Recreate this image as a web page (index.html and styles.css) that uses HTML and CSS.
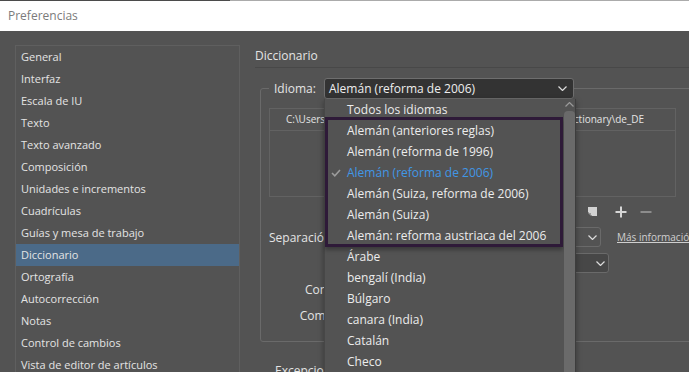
FILE: index.html
```html
<!DOCTYPE html>
<html>

<head>
    <title>Preferencias</title>
    <link rel="stylesheet" href="styles.css">
</head>

<body>
    <div class="edge"></div>
    <div class="titlebar">Preferencias</div>
    <div class="main">
        <ul class="sections">
            <li>General</li>
            <li>Interfaz</li>
            <li>Escala de IU</li>
            <li>Texto</li>
            <li>Texto avanzado</li>
            <li>Composición</li>
            <li>Unidades e incrementos</li>
            <li>Cuadrículas</li>
            <li>Guías y mesa de trabajo</li>
            <li class="current">Diccionario</li>
            <li>Ortografía</li>
            <li>Autocorrección</li>
            <li>Notas</li>
            <li>Control de cambios</li>
            <li>Vista de editor de artículos</li>
        </ul>
        <div class="pane">
            <h2>Diccionario</h2>
            <fieldset class="lang">
                <legend>
                    <span class="lang-label">Idioma:</span>
                    <span class="combo">
                        <span class="combo-value">Alemán (reforma de 2006)</span>
                        <svg class="chevron" width="9" height="5" viewBox="0 0 9 5">
                            <polyline points="0.5,0.5 4.5,4.5 8.5,0.5" />
                        </svg>
                        <div class="popup">
                            <ul class="options">
                                <li>Todos los idiomas</li>
                                <li>Alemán (anteriores reglas)</li>
                                <li>Alemán (reforma de 1996)</li>
                                <li class="selected">
                                    <svg class="check" width="10" height="8" viewBox="0 0 10 8">
                                        <polyline points="1,4 3.8,6.8 9,1" />
                                    </svg>Alemán (reforma de 2006)
                                </li>
                                <li>Alemán (Suiza, reforma de 2006)</li>
                                <li>Alemán (Suiza)</li>
                                <li>Alemán: reforma austriaca del 2006</li>
                                <li>Árabe</li>
                                <li>bengalí (India)</li>
                                <li>Búlgaro</li>
                                <li>canara (India)</li>
                                <li>Catalán</li>
                                <li>Checo</li>
                            </ul>
                            <div class="group-mark"></div>
                            <div class="scrollbar">
                                <svg class="scroll-up" width="9" height="5" viewBox="0 0 9 5">
                                    <polyline points="0.5,4.5 4.5,0.5 8.5,4.5" />
                                </svg>
                                <div class="thumb"></div>
                            </div>
                        </div>
                    </span>
                </legend>

                <div class="dicts">
                    <div class="dicts-head">C:\Users\ab\AppData\Roaming\Adobe\InDesign\Version 16\Dictionary\de_DE</div>
                </div>
                <div class="tools">
                    <svg class="tool" width="12" height="12" viewBox="0 0 12 12">
                        <circle cx="6" cy="6" r="4" fill="none" stroke="#bdbdbd" stroke-width="2" />
                    </svg>
                    <svg class="tool new" width="12" height="12" viewBox="0 0 12 12">
                        <polygon points="1,1 10,1 10,10 5,10 1,6" fill="#d2d2d2" />
                        <polygon points="1,7 4,7 4,10" fill="#9a9a9a" />
                    </svg>
                    <svg class="tool" width="12" height="12" viewBox="0 0 12 12">
                        <path d="M6 0.5V11.5M0.5 6H11.5" stroke="#d6d6d6" stroke-width="2" />
                    </svg>
                    <svg class="tool" width="12" height="12" viewBox="0 0 12 12">
                        <path d="M0.5 6H11.5" stroke="#8c8c8c" stroke-width="2" />
                    </svg>
                </div>

                <div class="settings">
                    <span class="field-label">Separación por sílabas:</span>
                    <span class="drop wide">Proximity
                        <svg class="chevron" width="9" height="5" viewBox="0 0 9 5">
                            <polyline points="0.5,0.5 4.5,4.5 8.5,0.5" />
                        </svg>
                    </span>
                    <a class="more" href="#">Más información</a>

                    <span class="field-label">Ortografía:</span>
                    <span class="drop wider dark">Hunspell
                        <svg class="chevron" width="9" height="5" viewBox="0 0 9 5">
                            <polyline points="0.5,0.5 4.5,4.5 8.5,0.5" />
                        </svg>
                    </span>
                    <span></span>

                    <span class="field-label">Comillas dobles:</span>
                    <span class="drop small">&ldquo;&rdquo;</span>
                    <span></span>

                    <span class="field-label">Comillas simples:</span>
                    <span class="drop small">&lsquo;&rsquo;</span>
                    <span></span>
                </div>
            </fieldset>
            <div class="sub">Excepciones de separación por sílabas</div>
        </div>
    </div>
</body>

</html>
```

FILE: styles.css
```css
html {
    --bg: #535353;
    --line: #6a6a6a;
    --text: #e4e4e4;
    --pick: #4197e6;
    --mark: #2e1a38;
}

html,
body {
    margin: 0;
    height: 100%;
    overflow: hidden;
}

body {
    background: var(--bg);
    font-family: "Open Sans", "Noto Sans", sans-serif;
    color: var(--text);
}

ul {
    list-style: none;
    margin: 0;
    padding: 0;
}

.edge {
    height: 1px;
    background: linear-gradient(to right, #4b4b4b 230px, #ababab 230px);
}

.titlebar {
    height: 30px;
    line-height: 30px;
    padding-left: 8px;
    background: #fff;
    color: #7b7b7b;
    font-size: 12px;
}

.main {
    display: flex;
    gap: 15px;
    padding: 14px 0 0 15px;
    height: 341px;
    box-sizing: border-box;
}

/* left list */
.sections {
    width: 223px;
    flex: none;
    border: 1px solid #5f5f5f;
    border-bottom: none;
}

.sections li {
    height: 22px;
    line-height: 22px;
    padding-left: 5px;
    font-size: 11px;
    white-space: nowrap;
}

.sections li.current {
    background: #4b6a88;
}

/* right pane */
.pane {
    flex: 1;
    min-width: 0;
}

h2 {
    margin: 0;
    height: 22px;
    line-height: 22px;
    font-size: 12px;
    font-weight: normal;
    border-bottom: 1px solid #484848;
}

.lang {
    margin: 10px -20px 0 5px;
    padding: 9px 0 16px 8px;
    border: 1px solid var(--line);
    border-radius: 3px;
    min-width: 0;
}

.lang legend {
    padding: 0 0 0 5px;
    margin-left: 0;
    display: flex;
    align-items: center;
    font-size: 12px;
}

.lang-label {
    width: 50px;
}

.combo {
    position: relative;
    display: flex;
    align-items: center;
    width: 250px;
    height: 21px;
    box-sizing: border-box;
    padding-left: 4px;
    background: #333;
    border: 1px solid #6e6e6e;
    border-radius: 3px;
    font-size: 12px;
    color: #eee;
}

.chevron {
    margin-left: auto;
    margin-right: 6px;
    fill: none;
    stroke: #dcdcdc;
    stroke-width: 1.2;
}

/* open list of the combo */
.popup {
    position: absolute;
    top: 20px;
    left: -1px;
    width: 250px;
    height: 300px;
    background: var(--bg);
    border-left: 1px solid #474747;
    border-right: 1px solid #3d3d3d;
    box-shadow: 0 2px 6px rgba(0, 0, 0, 0.35);
    z-index: 2;
}

.options li {
    height: 21px;
    line-height: 21px;
    padding-left: 22px;
    font-size: 12px;
    color: #ececec;
    white-space: nowrap;
}

.options li.selected {
    color: var(--pick);
}

.check {
    margin-left: -16px;
    margin-right: 6px;
    fill: none;
    stroke: #9c9c9c;
    stroke-width: 1.6;
}

.group-mark {
    position: absolute;
    top: 18px;
    left: 0;
    width: 232px;
    height: 124px;
    border: 3px solid var(--mark);
    box-shadow: 0 3px 4px rgba(0, 0, 0, 0.3);
}

.scrollbar {
    position: absolute;
    top: 0;
    right: 0;
    bottom: 0;
    width: 11px;
    display: flex;
    flex-direction: column;
    align-items: center;
}

.scroll-up {
    margin: 3px 0 4px;
    fill: none;
    stroke: #9a9a9a;
    stroke-width: 1.2;
}

.thumb {
    flex: 1;
    width: 11px;
    background: #6a6a6a;
    border-radius: 4px 4px 0 0;
}

/* behind the list */
.dicts {
    width: 405px;
    height: 87px;
    border: 1px solid #626262;
}

.dicts-head {
    height: 21px;
    line-height: 21px;
    padding-left: 16px;
    border-bottom: 1px solid #626262;
    font-size: 10px;
    white-space: nowrap;
    overflow: hidden;
}

.tools {
    width: 407px;
    display: flex;
    justify-content: flex-end;
    gap: 13px;
    margin-top: 9px;
    padding-right: 24px;
    box-sizing: border-box;
}

.tool.new {
    margin-left: 6px;
    margin-right: 3px;
}

.settings {
    display: grid;
    grid-template-columns: 127px auto 1fr;
    column-gap: 6px;
    row-gap: 6px;
    align-items: center;
    margin-top: 9px;
    font-size: 12px;
}

.field-label {
    text-align: right;
    white-space: nowrap;
}

.drop {
    display: flex;
    align-items: center;
    height: 20px;
    box-sizing: border-box;
    padding-left: 5px;
    border: 1px solid var(--line);
    border-radius: 3px;
}

.drop .chevron {
    margin-right: 3px;
}

.drop.wide {
    width: 199px;
}

.drop.wider {
    width: 207px;
}

.drop.dark {
    background: #474747;
}

.drop.small {
    width: 60px;
}

.more {
    justify-self: start;
    margin-left: 2px;
    font-size: 10px;
    color: #cfcfcf;
    white-space: nowrap;
}

.sub {
    margin-top: 20px;
    padding-left: 20px;
    font-size: 12px;
}
```
